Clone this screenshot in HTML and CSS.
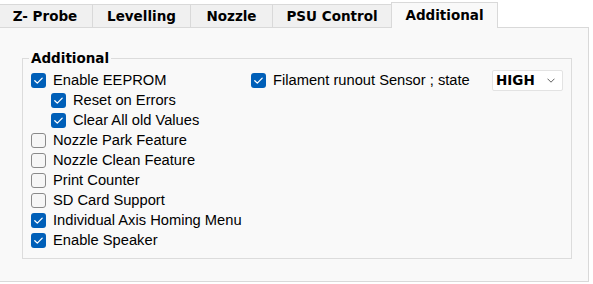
FILE: index.html
```html
<!DOCTYPE html>
<html>
<head>
<meta charset="utf-8">
<link rel="stylesheet" href="styles.css">
</head>
<body>
<div class="window">
  <div class="tabs">
    <div class="tab t1">Z- Probe</div>
    <div class="tab t2">Levelling</div>
    <div class="tab t3">Nozzle</div>
    <div class="tab t4">PSU Control</div>
    <div class="tab active">Additional</div>
  </div>
  <div class="panel">
    <fieldset class="group">
      <legend>Additional</legend>
      <div class="cols">
        <div class="col">
          <div class="row"><span class="cb on"><svg viewBox="0 0 15 15"><path d="M3.8 7.7 L6.3 10.1 L11.2 5.1"/></svg></span><span>Enable EEPROM</span></div>
          <div class="row sub"><span class="cb on"><svg viewBox="0 0 15 15"><path d="M3.8 7.7 L6.3 10.1 L11.2 5.1"/></svg></span><span>Reset on Errors</span></div>
          <div class="row sub"><span class="cb on"><svg viewBox="0 0 15 15"><path d="M3.8 7.7 L6.3 10.1 L11.2 5.1"/></svg></span><span>Clear All old Values</span></div>
          <div class="row"><span class="cb"></span><span>Nozzle Park Feature</span></div>
          <div class="row"><span class="cb"></span><span>Nozzle Clean Feature</span></div>
          <div class="row"><span class="cb"></span><span>Print Counter</span></div>
          <div class="row"><span class="cb"></span><span>SD Card Support</span></div>
          <div class="row"><span class="cb on"><svg viewBox="0 0 15 15"><path d="M3.8 7.7 L6.3 10.1 L11.2 5.1"/></svg></span><span>Individual Axis Homing Menu</span></div>
          <div class="row"><span class="cb on"><svg viewBox="0 0 15 15"><path d="M3.8 7.7 L6.3 10.1 L11.2 5.1"/></svg></span><span>Enable Speaker</span></div>
        </div>
        <div class="col">
          <div class="row"><span class="cb on"><svg viewBox="0 0 15 15"><path d="M3.8 7.7 L6.3 10.1 L11.2 5.1"/></svg></span><span>Filament runout Sensor ; state</span>
            <div class="select"><span>HIGH</span><svg class="chev" viewBox="0 0 8 5"><path d="M0.5 0.7 L4 4.2 L7.5 0.7"/></svg></div>
          </div>
        </div>
      </div>
    </fieldset>
  </div>
</div>
</body>
</html>
```

FILE: styles.css
```css
html, body {
  margin: 0;
  padding: 0;
  background: #ffffff;
  overflow: hidden;
}
body {
  font-family: "Liberation Sans", Arial, sans-serif;
  font-size: 14.7px;
  color: #000;
}
.window {
  margin-left: -2px;
  width: 591px;
}
.tabs {
  display: flex;
  align-items: flex-start;
  height: 27px;
}
.tab {
  box-sizing: border-box;
  height: 23px;
  margin-top: 4px;
  border-top: 1px solid #d9d9d9;
  border-right: 1px solid #d9d9d9;
  background: #f0f0f0;
  font-family: "DejaVu Sans", sans-serif;
  font-weight: bold;
  font-size: 13.5px;
  line-height: 22px;
  text-align: center;
  white-space: nowrap;
}
.t1 { width: 95px; }
.t2 { width: 98px; }
.t3 { width: 82px; }
.t4 { width: 118px; border-right: none; }
.tab.active {
  position: relative;
  z-index: 1;
  width: 107px;
  height: 26px;
  margin-top: 2px;
  border: 1px solid #d9d9d9;
  border-bottom: none;
  background: #f9f9f9;
  line-height: 25px;
}
.panel {
  box-sizing: border-box;
  width: 591px;
  height: 255px;
  border: 1px solid #d9d9d9;
  background: #f9f9f9;
  padding: 22px 16px 0 23px;
}
.group {
  margin: 0;
  border: 1px solid #dcdcdc;
  padding: 4px 8px 8px 8px;
  min-width: 0;
}
.group legend {
  font-family: "DejaVu Sans", sans-serif;
  font-weight: bold;
  font-size: 13.5px;
  line-height: 16px;
  padding: 0 2px;
  margin-left: -2px;
}
.cols {
  display: grid;
  grid-template-columns: 220px 1fr;
}
.row {
  display: flex;
  align-items: center;
  height: 20px;
  line-height: 20px;
  white-space: nowrap;
}
.row.sub {
  padding-left: 20px;
}
.cb {
  box-sizing: border-box;
  flex: none;
  width: 15px;
  height: 15px;
  margin-right: 7px;
  border-radius: 3px;
  border: 1px solid #8a8a8a;
  background: #f6f6f6;
  display: flex;
}
.cb.on {
  border: none;
  background: #005fb8;
}
.cb svg {
  width: 15px;
  height: 15px;
}
.cb svg path {
  fill: none;
  stroke: #ffffff;
  stroke-width: 1.3;
  stroke-linecap: round;
  stroke-linejoin: round;
}
.select {
  box-sizing: border-box;
  margin-left: auto;
  width: 71px;
  height: 21px;
  flex: none;
  display: flex;
  align-items: center;
  padding-left: 3px;
  border: 1px solid #e3e3e3;
  border-radius: 2px;
  background: #ffffff;
  font-family: "DejaVu Sans", sans-serif;
  font-weight: bold;
  font-size: 13.5px;
  line-height: 19px;
}
.chev {
  width: 8px;
  height: 5px;
  margin-left: 12px;
}
.chev path {
  fill: none;
  stroke: #606060;
  stroke-width: 1;
}
```
